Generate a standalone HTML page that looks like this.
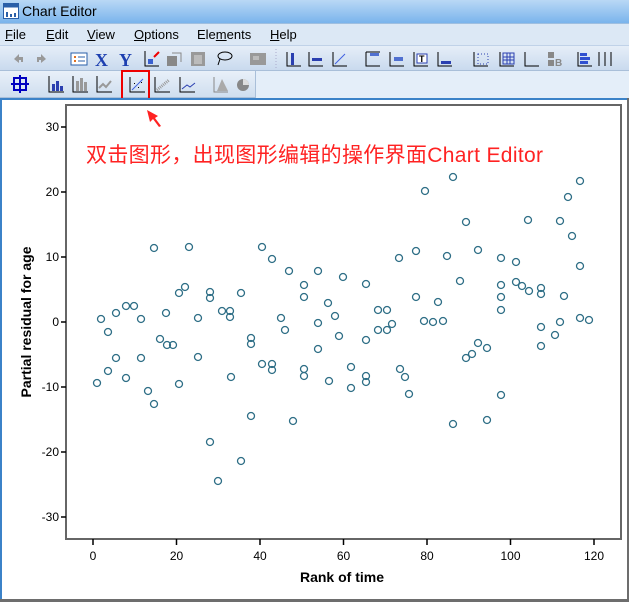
<!DOCTYPE html>
<html><head><meta charset="utf-8"><style>
*{margin:0;padding:0;box-sizing:border-box}
body{width:629px;height:602px;overflow:hidden;background:#fff;font-family:"Liberation Sans","Noto Sans CJK SC",sans-serif;position:relative}
.abs{position:absolute}
#title{left:0;top:0;width:629px;height:23px;background:linear-gradient(#b9d8f5,#7ab4ec);font-size:13px;color:#000}
#menu{left:0;top:23px;width:629px;height:22px;background:#dce8f5;border-top:1px solid #9fbfe0;font-size:13px}
#menu span{position:absolute;top:3px}
#tb1{left:0;top:45px;width:629px;height:26px;background:linear-gradient(#e6eef8,#c9daee);border-top:1px solid #c0d2e8;border-bottom:1px solid #a9bfd9}
#tb2bg{left:0;top:71px;width:629px;height:27px;background:#e4eef9}
#tb2{left:0;top:71px;width:256px;height:27px;background:linear-gradient(#e9f0f9,#cfdeef);border-right:1px solid #a9bfd9;border-bottom:1px solid #a9bfd9}
#blue{left:0;top:98px;width:629px;height:2px;background:#3b82c8}
#frameL{left:0;top:98px;width:2px;height:504px;background:#3b82c8}
#frameB{left:0;top:599px;width:629px;height:3px;background:#6d6d6d}
#frameR{left:627px;top:98px;width:2px;height:504px;background:#6d6d6d}
</style></head><body>
<div id="title" class="abs">
<svg class="abs" style="left:3px;top:3px" width="16" height="16"><rect x="0.5" y="0.5" width="15" height="15" fill="#fff" stroke="#2a5fa8"/><rect x="0.5" y="0.5" width="15" height="4" fill="#2a5fa8"/><rect x="3" y="9" width="2" height="5" fill="#2a5fa8"/><rect x="7" y="11" width="2" height="3" fill="#2a5fa8"/><rect x="11" y="10" width="2" height="4" fill="#2a5fa8"/></svg>
<span class="abs" style="left:22px;top:3px;font-size:14px">Chart Editor</span></div>
<div id="menu" class="abs">
<span style="left:5px"><u>F</u>ile</span><span style="left:46px"><u>E</u>dit</span><span style="left:87px"><u>V</u>iew</span><span style="left:134px"><u>O</u>ptions</span><span style="left:197px">Ele<u>m</u>ents</span><span style="left:270px"><u>H</u>elp</span></div>
<div id="tb1" class="abs">
<svg width="629" height="26">
<g fill="#999"><path d="M14 13 l5-5 v3 h4 v5 h-2 v-2 h-2 v3z"/><path d="M46 13 l-5-5 v3 h-4 v5 h2 v-2 h2 v3z"/></g>
<rect x="71" y="7" width="16" height="12" fill="#fff" stroke="#2a5fa8"/><g fill="#e07020"><rect x="74" y="10" width="2" height="2"/><rect x="74" y="14" width="2" height="2"/></g><g stroke="#2a5fa8"><line x1="78" y1="11" x2="85" y2="11"/><line x1="78" y1="15" x2="85" y2="15"/></g>
<text x="95" y="20" font-family="Liberation Serif" font-weight="bold" font-size="18" fill="#1d3fb0">X</text>
<text x="119" y="20" font-family="Liberation Serif" font-weight="bold" font-size="18" fill="#1d3fb0">Y</text>
<path d="M145 5 v15 h14" stroke="#000" fill="none"/><rect x="148" y="13" width="5" height="5" fill="#3a60d0"/><path d="M159 6 l-5 5" stroke="#e00" stroke-width="2"/>
<rect x="167" y="10" width="10" height="10" fill="#888"/><path d="M172 7 h9 v9" stroke="#888" fill="none"/>
<rect x="191" y="6" width="14" height="14" fill="#999"/><rect x="194" y="9" width="8" height="9" fill="#bbb"/>
<ellipse cx="225" cy="10" rx="7" ry="4" stroke="#000" fill="none"/><path d="M220 13 l-2 6" stroke="#000"/>
<rect x="250" y="7" width="16" height="12" fill="#999"/><rect x="253" y="10" width="6" height="4" fill="#bbb"/>
<line x1="276" y1="3" x2="276" y2="23" stroke="#aac" stroke-dasharray="1,2"/>
<g stroke="#000" fill="none"><path d="M287 6 v14 h14"/><path d="M309 6 v14 h14"/><path d="M333 6 v14 h14"/><path d="M366 6 v14 h14 M366 6 h14"/><path d="M390 6 v14 h14"/><path d="M414 6 v14 h14"/><path d="M438 6 v14 h14"/><path d="M474 6 v14 h14"/><path d="M500 6 v14 h14"/><path d="M525 6 v14 h14"/><path d="M578 6 v14 h14"/><path d="M599 6 v14"/><path d="M605 6 v14"/><path d="M611 6 v14"/></g>
<rect x="291" y="7" width="3" height="12" fill="#2a3fb0"/><rect x="312" y="12" width="10" height="3" fill="#2a3fb0"/><path d="M335 18 l10-10" stroke="#4060e0"/><rect x="370" y="7" width="9" height="3" fill="#5070d0"/><rect x="394" y="11" width="9" height="4" fill="#5070d0"/><rect x="417" y="8" width="10" height="9" fill="#fff" stroke="#2a3fb0"/><text x="419" y="16" font-size="9" font-weight="bold">T</text><rect x="441" y="15" width="10" height="3" fill="#2a3fb0"/>
<g fill="#2a3fb0"><rect x="478" y="8" width="10" height="10" fill="none" stroke="#2a3fb0" stroke-dasharray="1,2"/><rect x="503" y="7" width="11" height="11" fill="none" stroke="#2a3fb0"/><path d="M503 11h11M503 14h11M507 7v11M510 7v11" stroke="#2a3fb0"/></g>
<rect x="548" y="6" width="6" height="6" fill="#888"/><rect x="548" y="14" width="6" height="6" fill="#888"/><text x="555" y="20" font-size="10" font-weight="bold" fill="#888">B</text>
<g fill="#3050d0"><rect x="580" y="7" width="7" height="3"/><rect x="580" y="11" width="10" height="3"/><rect x="580" y="15" width="8" height="3"/></g>
</svg></div>
<div id="tb2bg" class="abs"></div>
<div id="tb2" class="abs"><svg width="256" height="27">
<g stroke="#0000c0" fill="none" stroke-width="2"><rect x="14" y="7" width="12" height="12"/><path d="M20 4v18M11 13h18"/></g>
<g stroke="#000" fill="none"><path d="M49 5v16h15"/><path d="M73 5v16h15"/><path d="M97 5v16h15"/><path d="M130 6v15h15"/><path d="M155 6v15h15"/><path d="M180 6v15h15"/><path d="M214 6v15h14" stroke="#888"/></g>
<g fill="#2a3fb0"><rect x="52" y="13" width="3" height="7"/><rect x="56" y="10" width="3" height="10"/><rect x="60" y="15" width="3" height="5"/></g>
<g fill="#999"><rect x="76" y="10" width="3" height="10"/><rect x="80" y="7" width="3" height="13"/><rect x="84" y="11" width="3" height="9"/></g>
<path d="M99 17l4-4 3 3 5-6" stroke="#999" fill="none" stroke-width="2"/>
<path d="M132 19l11-11" stroke="#4060e0"/><g fill="#000"><rect x="134" y="12" width="1" height="1"/><rect x="138" y="16" width="1" height="1"/><rect x="141" y="11" width="1" height="1"/></g>
<path d="M157 19l12-10" stroke="#999" stroke-width="3" stroke-dasharray="1,1"/>
<path d="M182 18l5-4 3 2 5-4" stroke="#2a3fb0" fill="none"/>
<path d="M217 20l5-12 6 12z" fill="#aaa"/>
<circle cx="243" cy="14" r="6" fill="#888"/><path d="M243 14v-6a6 6 0 0 1 6 6z" fill="#ddd"/>
</svg></div>
<div class="abs" style="left:121px;top:70px;width:29px;height:30px;border:2px solid #e00"></div>
<div id="blue" class="abs"></div>
<div id="frameL" class="abs"></div>
<div id="frameR" class="abs"></div>
<div id="frameB" class="abs"></div>
<svg class="abs" style="left:0;top:0" width="629" height="602">
<rect x="66" y="105" width="555" height="434" fill="none" stroke="#666" stroke-width="2"/>
<path d="M147 110 l3 12 3-3 6 8 2-1-6-8 3-2z" fill="#f22"/>
<g stroke="#000" stroke-width="1.5">
<line x1="61" y1="127" x2="66" y2="127"/><line x1="61" y1="192" x2="66" y2="192"/><line x1="61" y1="257" x2="66" y2="257"/><line x1="61" y1="322" x2="66" y2="322"/><line x1="61" y1="387" x2="66" y2="387"/><line x1="61" y1="452" x2="66" y2="452"/><line x1="61" y1="517" x2="66" y2="517"/>
<line x1="93" y1="539" x2="93" y2="545"/><line x1="176.5" y1="539" x2="176.5" y2="545"/><line x1="260" y1="539" x2="260" y2="545"/><line x1="343.5" y1="539" x2="343.5" y2="545"/><line x1="427" y1="539" x2="427" y2="545"/><line x1="510.5" y1="539" x2="510.5" y2="545"/><line x1="594" y1="539" x2="594" y2="545"/>
</g>
<g font-size="12" text-anchor="end" fill="#000"><text x="59" y="131">30</text><text x="59" y="196">20</text><text x="59" y="261">10</text><text x="59" y="326">0</text><text x="59" y="391">-10</text><text x="59" y="456">-20</text><text x="59" y="521">-30</text></g>
<g font-size="12" text-anchor="middle"><text x="93" y="560">0</text><text x="176.5" y="560">20</text><text x="260" y="560">40</text><text x="343.5" y="560">60</text><text x="427" y="560">80</text><text x="510.5" y="560">100</text><text x="594" y="560">120</text></g>
<text x="342" y="582" font-size="14" font-weight="bold" text-anchor="middle">Rank of time</text>
<text transform="translate(31,322) rotate(-90)" font-size="14" font-weight="bold" text-anchor="middle">Partial residual for age</text>
<text x="86" y="162" font-size="21" fill="#f22" textLength="457" font-family="'Liberation Sans','Noto Sans CJK SC',sans-serif">双击图形，出现图形编辑的操作界面Chart Editor</text>
<g fill="none" stroke="#2e6e86" stroke-width="1.3">
<circle cx="97" cy="383" r="3.5"/><circle cx="101" cy="319" r="3.5"/><circle cx="108" cy="332" r="3.5"/><circle cx="108" cy="371" r="3.5"/><circle cx="116" cy="358" r="3.5"/><circle cx="116" cy="313" r="3.5"/><circle cx="126" cy="378" r="3.5"/><circle cx="126" cy="306" r="3.5"/><circle cx="134" cy="306" r="3.5"/><circle cx="141" cy="358" r="3.5"/><circle cx="141" cy="319" r="3.5"/><circle cx="148" cy="391" r="3.5"/><circle cx="154" cy="248" r="3.5"/><circle cx="154" cy="404" r="3.5"/><circle cx="160" cy="339" r="3.5"/><circle cx="166" cy="313" r="3.5"/><circle cx="167" cy="345" r="3.5"/><circle cx="173" cy="345" r="3.5"/><circle cx="179" cy="384" r="3.5"/><circle cx="179" cy="293" r="3.5"/><circle cx="185" cy="287" r="3.5"/><circle cx="189" cy="247" r="3.5"/><circle cx="198" cy="357" r="3.5"/><circle cx="198" cy="318" r="3.5"/><circle cx="210" cy="442" r="3.5"/><circle cx="210" cy="292" r="3.5"/><circle cx="210" cy="298" r="3.5"/><circle cx="218" cy="481" r="3.5"/><circle cx="222" cy="311" r="3.5"/><circle cx="230" cy="311" r="3.5"/><circle cx="230" cy="317" r="3.5"/><circle cx="231" cy="377" r="3.5"/><circle cx="241" cy="461" r="3.5"/><circle cx="241" cy="293" r="3.5"/><circle cx="251" cy="338" r="3.5"/><circle cx="251" cy="344" r="3.5"/><circle cx="251" cy="416" r="3.5"/><circle cx="262" cy="247" r="3.5"/><circle cx="262" cy="364" r="3.5"/><circle cx="272" cy="259" r="3.5"/><circle cx="272" cy="364" r="3.5"/><circle cx="272" cy="370" r="3.5"/><circle cx="281" cy="318" r="3.5"/><circle cx="285" cy="330" r="3.5"/><circle cx="289" cy="271" r="3.5"/><circle cx="293" cy="421" r="3.5"/><circle cx="304" cy="285" r="3.5"/><circle cx="304" cy="297" r="3.5"/><circle cx="304" cy="369" r="3.5"/><circle cx="304" cy="376" r="3.5"/><circle cx="318" cy="271" r="3.5"/><circle cx="318" cy="323" r="3.5"/><circle cx="318" cy="349" r="3.5"/><circle cx="328" cy="303" r="3.5"/><circle cx="329" cy="381" r="3.5"/><circle cx="335" cy="316" r="3.5"/><circle cx="343" cy="277" r="3.5"/><circle cx="351" cy="388" r="3.5"/><circle cx="351" cy="367" r="3.5"/><circle cx="339" cy="336" r="3.5"/><circle cx="366" cy="340" r="3.5"/><circle cx="366" cy="376" r="3.5"/><circle cx="366" cy="382" r="3.5"/><circle cx="366" cy="284" r="3.5"/><circle cx="378" cy="330" r="3.5"/><circle cx="378" cy="310" r="3.5"/><circle cx="387" cy="310" r="3.5"/><circle cx="387" cy="330" r="3.5"/><circle cx="392" cy="324" r="3.5"/><circle cx="399" cy="258" r="3.5"/><circle cx="400" cy="369" r="3.5"/><circle cx="405" cy="377" r="3.5"/><circle cx="409" cy="394" r="3.5"/><circle cx="416" cy="297" r="3.5"/><circle cx="416" cy="251" r="3.5"/><circle cx="424" cy="321" r="3.5"/><circle cx="425" cy="191" r="3.5"/><circle cx="433" cy="322" r="3.5"/><circle cx="438" cy="302" r="3.5"/><circle cx="443" cy="321" r="3.5"/><circle cx="447" cy="256" r="3.5"/><circle cx="453" cy="177" r="3.5"/><circle cx="453" cy="424" r="3.5"/><circle cx="460" cy="281" r="3.5"/><circle cx="466" cy="222" r="3.5"/><circle cx="466" cy="358" r="3.5"/><circle cx="472" cy="354" r="3.5"/><circle cx="478" cy="250" r="3.5"/><circle cx="478" cy="343" r="3.5"/><circle cx="487" cy="420" r="3.5"/><circle cx="487" cy="348" r="3.5"/><circle cx="501" cy="297" r="3.5"/><circle cx="501" cy="285" r="3.5"/><circle cx="501" cy="310" r="3.5"/><circle cx="501" cy="258" r="3.5"/><circle cx="501" cy="395" r="3.5"/><circle cx="516" cy="262" r="3.5"/><circle cx="516" cy="282" r="3.5"/><circle cx="522" cy="286" r="3.5"/><circle cx="528" cy="220" r="3.5"/><circle cx="529" cy="291" r="3.5"/><circle cx="541" cy="288" r="3.5"/><circle cx="541" cy="294" r="3.5"/><circle cx="541" cy="327" r="3.5"/><circle cx="541" cy="346" r="3.5"/><circle cx="555" cy="335" r="3.5"/><circle cx="560" cy="322" r="3.5"/><circle cx="560" cy="221" r="3.5"/><circle cx="564" cy="296" r="3.5"/><circle cx="568" cy="197" r="3.5"/><circle cx="572" cy="236" r="3.5"/><circle cx="580" cy="266" r="3.5"/><circle cx="580" cy="318" r="3.5"/><circle cx="580" cy="181" r="3.5"/><circle cx="589" cy="320" r="3.5"/>
</g>
</svg>
</body></html>
